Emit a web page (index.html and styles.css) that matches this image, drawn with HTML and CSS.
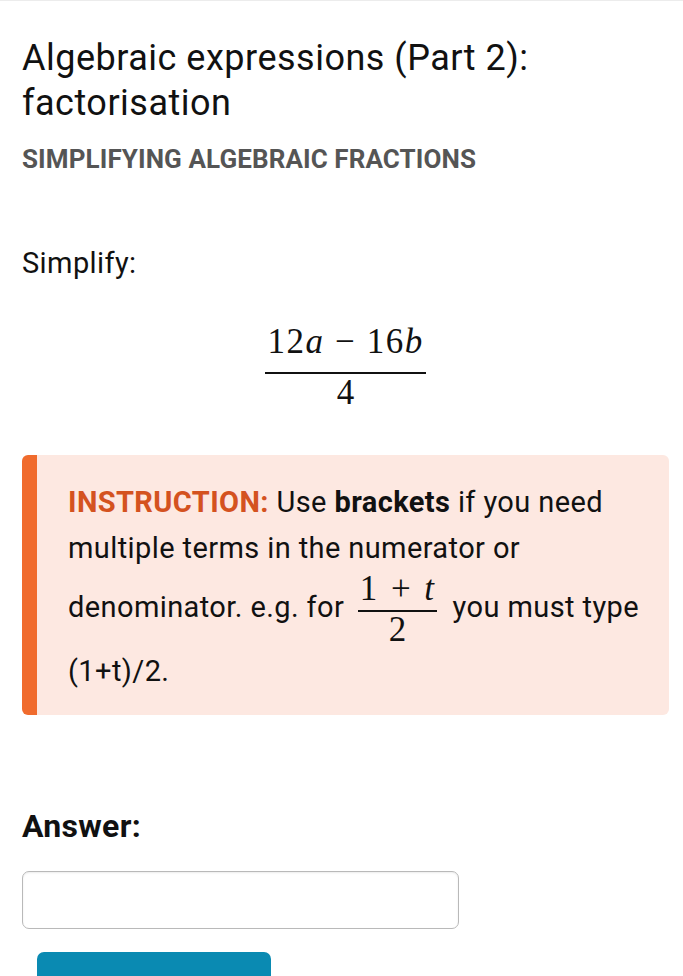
FILE: index.html
```html
<!DOCTYPE html>
<html lang="en">
<head>
    <meta charset="UTF-8">
    <meta name="viewport" content="width=device-width, initial-scale=1.0">
    <title>Simplifying algebraic fractions</title>
    <link rel="stylesheet" href="styles.css">
</head>
<body>
<div class="page">

    <h1 class="titulo">Algebraic expressions (Part 2): factorisation</h1>
    <h2 class="sub">SIMPLIFYING ALGEBRAIC FRACTIONS</h2>

    <p class="pregunta">Simplify:</p>

    <div class="display">
        <span class="frac grande">
            <span class="num">12<i>a</i><span class="op">&minus;</span>16<i>b</i></span>
            <span class="barra"></span>
            <span class="den">4</span>
        </span>
    </div>

    <div class="aviso">
        <b class="etiqueta">INSTRUCTION:</b> Use <b>brackets</b> if you need multiple terms in the numerator or denominator. e.g. for
        <span class="frac chica">
            <span class="num">1<span class="op">+</span><i>t</i></span>
            <span class="barra"></span>
            <span class="den">2</span>
        </span>
        you must type (1+t)/2.
    </div>

    <h3 class="respuesta">Answer:</h3>
    <input type="text" class="caja">
    <div class="boton"></div>

</div>
</body>
</html>
```

FILE: styles.css
```css
body{
    margin: 0;
    background-color: white;
    font-family: Roboto, "Noto Sans", sans-serif;
    color: #111;
}
.page{
    border-top: 1px solid #ececec;
    padding: 0 14px 0 22px;
}

.titulo{
    margin: 35px 0 0 0;
    font-size: 36px;
    letter-spacing: 0.5px;
    line-height: 45px;
    font-weight: normal;
}
.sub{
    margin: 18px 0 0 0;
    font-size: 26px;
    letter-spacing: 0.1px;
    line-height: 30px;
    font-weight: bold;
    color: #555;
}
.pregunta{
    margin: 72px 0 0 0;
    font-size: 29px;
    letter-spacing: 0.4px;
    line-height: 34px;
}

/* fracciones */
.display{
    text-align: center;
    margin-top: 43px;
}
.frac{
    display: inline-block;
    vertical-align: middle;
    text-align: center;
    font-family: "Liberation Serif", "Times New Roman", serif;
    letter-spacing: 0;
}
.frac .num, .frac .den{
    display: block;
}
.frac .barra{
    display: block;
    height: 2px;
    background-color: #111;
}
.frac .op{
    margin: 0 0.3em;
}
.grande{
    font-size: 35px;
}
.grande .num, .grande .den{
    line-height: 38px;
    padding: 0 2px;
}
.grande .num{
    letter-spacing: 1.5px;
    padding-bottom: 11px;
}
.chica{
    font-size: 35px;
    margin: 0 8px 0 6px;
}
.chica .num, .chica .den{
    line-height: 36px;
    padding: 0 2px;
}
.chica .num{
    letter-spacing: 1px;
    padding-bottom: 3px;
}
.chica .op{
    margin: 0 0.36em;
}

/* caja de instruccion */
.aviso{
    margin-top: 43px;
    background-color: #fde8e1;
    border-left: 15px solid #f06b2d;
    border-radius: 6px;
    padding: 24px 20px 21px 31px;
    font-size: 29px;
    letter-spacing: 0.4px;
    line-height: 46px;
}
.etiqueta{
    color: #d4521f;
}

.respuesta{
    margin: 93px 0 0 0;
    font-size: 32px;
    letter-spacing: 0.3px;
    line-height: 36px;
    font-weight: bold;
}
.caja{
    display: block;
    box-sizing: border-box;
    margin-top: 27px;
    width: 437px;
    height: 58px;
    border: 1px solid #b9b9b9;
    border-radius: 7px;
    box-shadow: inset 0 1px 2px rgba(0,0,0,0.08);
    background-color: white;
}
.boton{
    margin: 23px 0 0 15px;
    width: 234px;
    height: 60px;
    background-color: #0a8ab2;
    border-radius: 7px;
}
```
